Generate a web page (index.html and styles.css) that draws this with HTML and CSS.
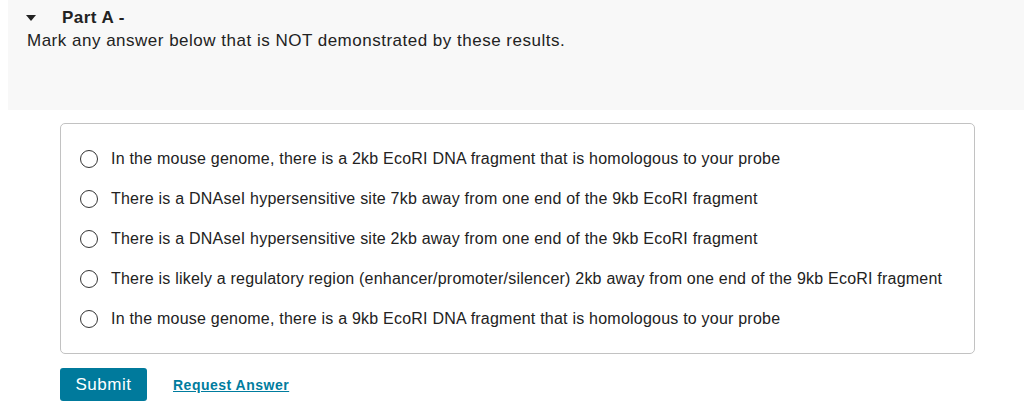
FILE: index.html
```html
<!DOCTYPE html>
<html>
<head>
<meta charset="utf-8">
<link rel="stylesheet" href="styles.css">
</head>
<body>
<div class="header">
  <div class="title"><span class="caret"></span><span class="title-text">Part A -</span></div>
  <div class="prompt">Mark any answer below that is NOT demonstrated by these results.</div>
</div>
<div class="choices">
  <label class="choice"><span class="radio"></span><span class="choice-text">In the mouse genome, there is a 2kb EcoRI DNA fragment that is homologous to your probe</span></label>
  <label class="choice"><span class="radio"></span><span class="choice-text">There is a DNAseI hypersensitive site 7kb away from one end of the 9kb EcoRI fragment</span></label>
  <label class="choice"><span class="radio"></span><span class="choice-text">There is a DNAseI hypersensitive site 2kb away from one end of the 9kb EcoRI fragment</span></label>
  <label class="choice"><span class="radio"></span><span class="choice-text">There is likely a regulatory region (enhancer/promoter/silencer) 2kb away from one end of the 9kb EcoRI fragment</span></label>
  <label class="choice"><span class="radio"></span><span class="choice-text">In the mouse genome, there is a 9kb EcoRI DNA fragment that is homologous to your probe</span></label>
</div>
<div class="actions">
  <button class="submit">Submit</button>
  <a class="request" href="#">Request Answer</a>
</div>
</body>
</html>
```
FILE: styles.css
```css
html, body {
  margin: 0;
  padding: 0;
  background: #ffffff;
}
body {
  padding: 0 0 0 8px;
  font-family: "Liberation Sans", Arial, sans-serif;
  color: #222222;
}
.header {
  background: #f8f8f8;
  height: 110px;
  box-sizing: border-box;
  padding: 7px 0 0 19px;
}
.title {
  display: flex;
  align-items: center;
  height: 21px;
  margin-bottom: 3px;
}
.caret {
  width: 0;
  height: 0;
  border-left: 5.5px solid transparent;
  border-right: 5.5px solid transparent;
  border-top: 6px solid #222222;
  margin-left: -1px;
  margin-top: 1px;
}
.title-text {
  margin-left: 26px;
  font-weight: bold;
  font-size: 17px;
  letter-spacing: 0.45px;
  line-height: 21px;
}
.prompt {
  font-size: 17px;
  letter-spacing: 0.5px;
  line-height: 20px;
}
.choices {
  margin: 13px 0 0 52px;
  width: 915px;
  box-sizing: border-box;
  border: 1px solid #c2c2c2;
  border-radius: 5px;
  padding: 15px 0 14px 19px;
}
.choice {
  display: flex;
  align-items: center;
  height: 40px;
  font-size: 16px;
  letter-spacing: 0.22px;
}
.radio {
  width: 18px;
  height: 18px;
  box-sizing: border-box;
  border: 1.6px solid #333333;
  border-radius: 50%;
  flex: none;
}
.choice-text {
  margin-left: 13px;
  color: #222222;
}
.actions {
  display: flex;
  align-items: center;
  margin: 14px 0 0 52px;
}
.submit {
  width: 87px;
  height: 33px;
  background: #007a9c;
  color: #ffffff;
  border: none;
  border-radius: 3px;
  font-family: "Liberation Sans", Arial, sans-serif;
  font-size: 17px;
  letter-spacing: 0.5px;
  padding: 0;
}
.request {
  margin-left: 26px;
  color: #007c9e;
  font-weight: bold;
  font-size: 14px;
  letter-spacing: 0.5px;
  text-decoration: underline;
}
```
